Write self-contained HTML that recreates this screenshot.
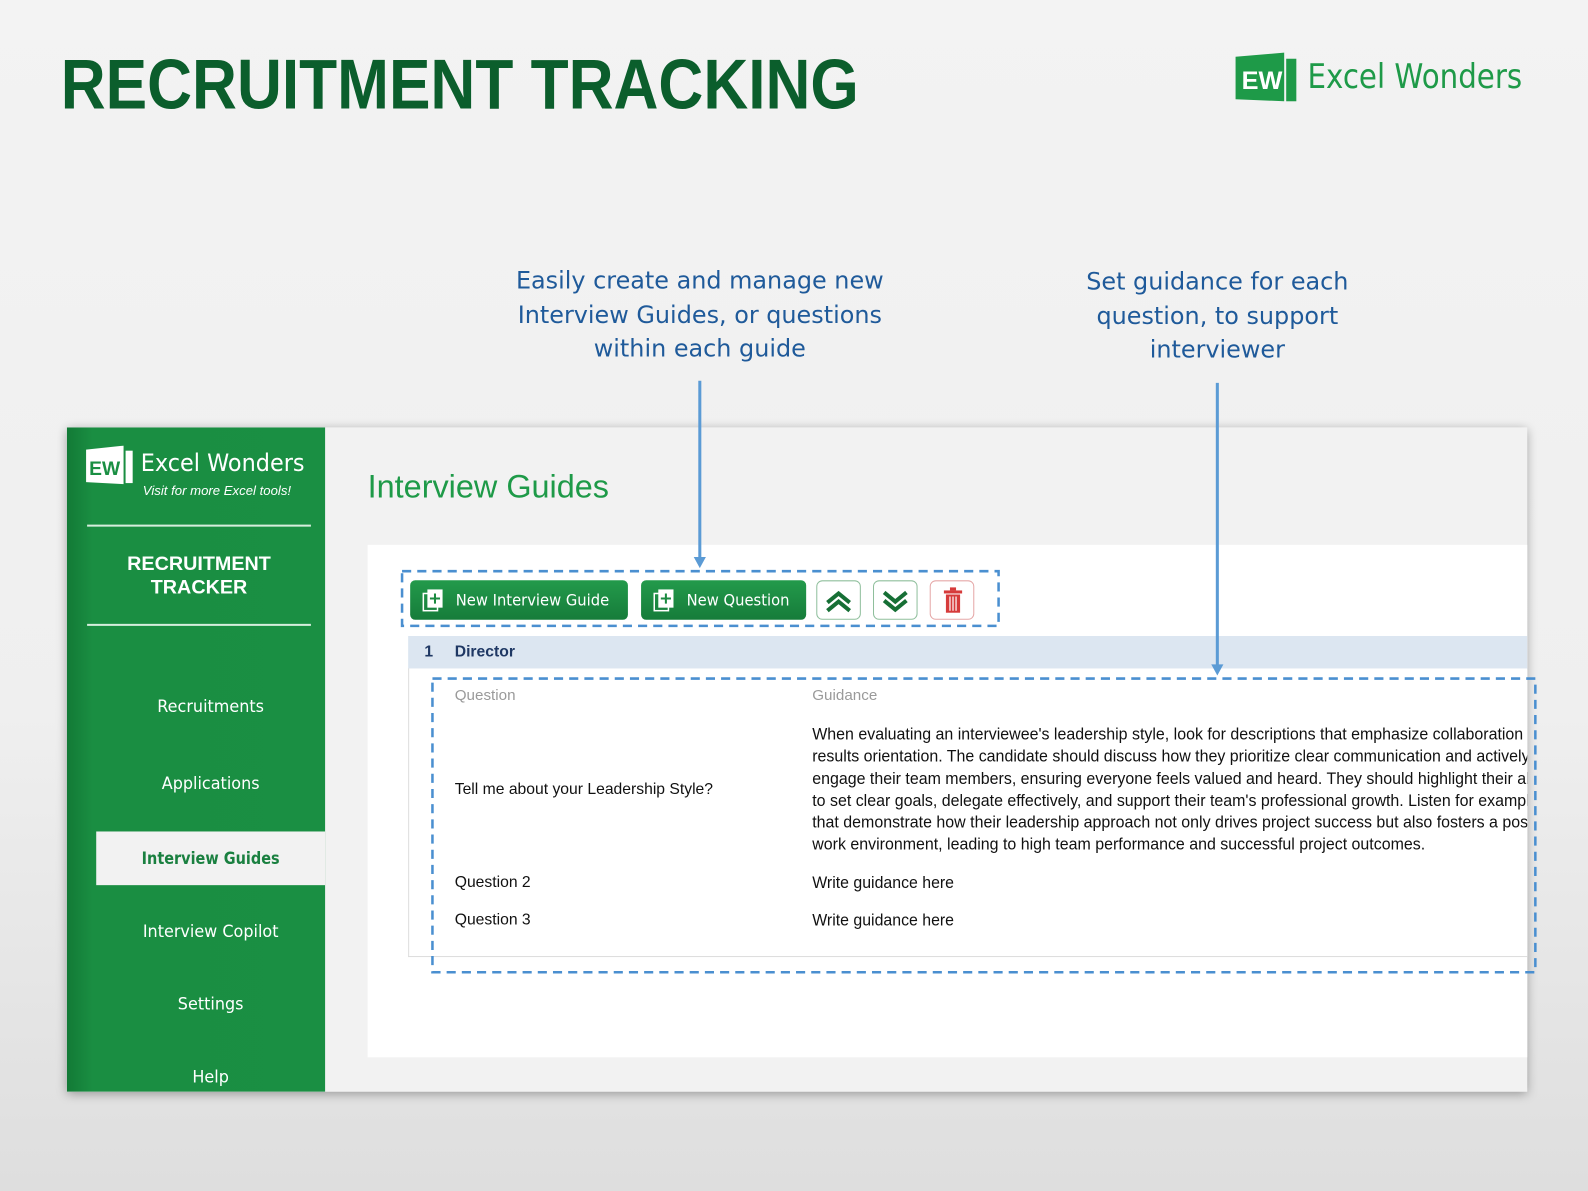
<!DOCTYPE html>
<html><head><meta charset="utf-8"><style>
html,body{margin:0;padding:0;width:1588px;height:1191px;overflow:hidden}
body{background:linear-gradient(180deg,#f3f3f3 0%,#efefef 60%,#dedede 100%);font-family:"Liberation Sans",sans-serif}
#w{position:absolute;left:0;top:0;width:1568px;height:1176px;transform:scale(1.01276);transform-origin:0 0}
.a{position:absolute}
.ann{position:absolute;color:#1f5a9a;font-size:23.6px;line-height:33.5px;text-align:center;font-family:"DejaVu Sans","Liberation Sans",sans-serif;letter-spacing:0}
.menu{position:absolute;left:95px;width:226px;text-align:center;color:#fff;font-size:17px;font-family:"DejaVu Sans",sans-serif;transform:scaleX(.93)}
.btn{position:absolute;top:573px;height:39px;border-radius:5px;background:linear-gradient(180deg,#239a4b,#167c3a);color:#fff;font-size:16px;font-family:"DejaVu Sans",sans-serif;line-height:39px}
.btn span{transform:scaleX(.91);transform-origin:0 50%}
.sb{position:absolute;top:573px;width:44px;height:39px;border:1px solid #8fbf9c;border-radius:6px;background:#fff;box-sizing:border-box}
.g{position:absolute;left:802px;font-size:16.5px;color:#111;transform:scaleX(0.955);transform-origin:0 0;white-space:nowrap}
</style></head><body><div id="w">
<svg class="a" style="left:0;top:0" width="1568" height="140">
<text x="60" y="107" font-family="Liberation Sans" font-weight="bold" font-size="70" fill="#0b5e2c" textLength="788" lengthAdjust="spacingAndGlyphs">RECRUITMENT TRACKING</text>
<g transform="translate(1220,52)"><path d="M0 4 L48 0 L48 48 L0 46Z" fill="#1e9a48"/><rect x="50" y="6" width="10" height="42" fill="#1e9a48"/><text x="6" y="36" font-family="Liberation Sans" font-weight="bold" font-size="25" fill="#fff">EW</text></g>
<text x="1291" y="87" font-family="DejaVu Sans" font-size="33" fill="#1e9a48" textLength="212" lengthAdjust="spacingAndGlyphs">Excel Wonders</text>
</svg>
<div class="ann" style="left:480px;top:261px;width:422px">Easily create and manage new<br>Interview Guides, or questions<br>within each guide</div>
<div class="ann" style="left:1000px;top:262px;width:404px">Set guidance for each<br>question, to support<br>interviewer</div>

<div class="a" style="left:66px;top:422px;width:1442px;height:656px;background:#f2f2f2;box-shadow:0 2px 10px rgba(0,0,0,.35);overflow:hidden">
 <div class="a" style="left:0;top:0;width:255px;height:656px;background:linear-gradient(90deg,#127a36 0%,#1a8e42 10%,#1a8f43 100%)"></div>
 <div class="a" style="left:297px;top:116px;width:1160px;height:506px;background:#fff"></div>
 <div class="a" style="left:297px;top:40px;color:#1e9a48;font-size:32px">Interview Guides</div>
</div>
<svg class="a" style="left:84px;top:440px" width="50" height="40"><path d="M1 4 L38 0 L38 38 L1 36Z" fill="#fff"/><rect x="40" y="5" width="7" height="32" fill="#fff"/><text x="4" y="29" font-family="Liberation Sans" font-weight="bold" font-size="19" fill="#1a8f43">EW</text></svg>
<div class="a" style="left:139px;top:443px;color:#fff;font-size:24px;font-family:'DejaVu Sans',sans-serif;transform:scaleX(.92);transform-origin:0 0">Excel Wonders</div>
<div class="a" style="left:141px;top:477px;color:#fff;font-size:13px;font-style:italic">Visit for more Excel tools!</div>
<div class="a" style="left:86px;top:518px;width:221px;height:2px;background:#d6eedd"></div>
<div class="a" style="left:86px;top:546px;width:221px;text-align:center;color:#fff;font-weight:bold;font-size:19.5px;line-height:23px">RECRUITMENT<br>TRACKER</div>
<div class="a" style="left:86px;top:616px;width:221px;height:2px;background:#d6eedd"></div>
<div class="menu" style="top:688px">Recruitments</div>
<div class="menu" style="top:764px">Applications</div>
<div class="a" style="left:95px;top:821px;width:226px;height:53px;background:#f2f2f2"></div>
<div class="menu" style="top:838px;color:#1a8040;font-weight:bold;transform:scaleX(.84)">Interview Guides</div>
<div class="menu" style="top:910px">Interview Copilot</div>
<div class="menu" style="top:982px">Settings</div>
<div class="menu" style="top:1054px">Help</div>

<div class="btn" style="left:405px;width:215px"><svg class="a" style="left:12px;top:8px" width="22" height="24"><rect x="1" y="5" width="14" height="17" fill="none" stroke="#fff" stroke-width="1.5"/><rect x="5" y="1" width="15" height="18" fill="#fff"/><path d="M12.5 5v10M7.5 10h10" stroke="#1a8a40" stroke-width="2"/></svg><span style="position:absolute;left:45px">New Interview Guide</span></div>
<div class="btn" style="left:633px;width:163px"><svg class="a" style="left:12px;top:8px" width="22" height="24"><rect x="1" y="5" width="14" height="17" fill="none" stroke="#fff" stroke-width="1.5"/><rect x="5" y="1" width="15" height="18" fill="#fff"/><path d="M12.5 5v10M7.5 10h10" stroke="#1a8a40" stroke-width="2"/></svg><span style="position:absolute;left:45px">New Question</span></div>
<div class="sb" style="left:806px"><svg width="44" height="39"><path d="M10 21l11-9 11 9M10 29l11-9 11 9" fill="none" stroke="#166f35" stroke-width="4"/></svg></div>
<div class="sb" style="left:862px"><svg width="44" height="39"><path d="M10 11l11 9 11-9M10 19l11 9 11-9" fill="none" stroke="#166f35" stroke-width="4"/></svg></div>
<div class="sb" style="left:918px;border-color:#e5a7a7"><svg width="44" height="39"><rect x="13" y="9" width="18" height="3" fill="#d63b3b"/><rect x="19" y="6" width="6" height="3" fill="#d63b3b"/><rect x="15" y="13" width="14" height="18" fill="#d63b3b"/><path d="M19 15v14M22 15v14M25 15v14" stroke="#fff" stroke-width="1.2"/></svg></div>

<div class="a" style="left:403px;top:628px;width:1105px;height:32px;background:#dce6f1;border-bottom:1px solid #c8d4e0"></div>
<div class="a" style="left:419px;top:635px;color:#1f3864;font-weight:bold;font-size:15.5px">1</div>
<div class="a" style="left:449px;top:635px;color:#1f3864;font-weight:bold;font-size:15.5px">Director</div>
<div class="a" style="left:403px;top:660px;width:1105px;height:285px;background:#fff;border-left:1px solid #ddd;border-bottom:1px solid #ddd;box-sizing:border-box"></div>
<div class="a" style="left:449px;top:678px;color:#9a9a9a;font-size:15px">Question</div>
<div class="a" style="left:802px;top:678px;color:#9a9a9a;font-size:15px">Guidance</div>
<div class="a" style="left:449px;top:771px;color:#111;font-size:15.5px">Tell me about your Leadership Style?</div>
<div class="a" style="left:449px;top:863px;color:#111;font-size:15.5px">Question 2</div>
<div class="a" style="left:449px;top:900px;color:#111;font-size:15.5px">Question 3</div>
<div class="a" style="left:802px;top:863px;color:#111;font-size:16.5px;transform:scaleX(.95);transform-origin:0 0">Write guidance here</div>
<div class="a" style="left:802px;top:900px;color:#111;font-size:16.5px;transform:scaleX(.95);transform-origin:0 0">Write guidance here</div>
<div class="a" style="left:0;top:0;width:1508px;height:1176px;overflow:hidden">
<div class="g" style="top:716px">When evaluating an interviewee's leadership style, look for descriptions that emphasize collaboration and</div>
<div class="g" style="top:738px">results orientation. The candidate should discuss how they prioritize clear communication and actively</div>
<div class="g" style="top:760px">engage their team members, ensuring everyone feels valued and heard. They should highlight their ability</div>
<div class="g" style="top:782px">to set clear goals, delegate effectively, and support their team's professional growth. Listen for examples</div>
<div class="g" style="top:803px">that demonstrate how their leadership approach not only drives project success but also fosters a positive</div>
<div class="g" style="top:825px">work environment, leading to high team performance and successful project outcomes.</div>
</div>

<svg class="a" style="left:0;top:0" width="1568" height="1176">
<g fill="none" stroke="#4a8fd0" stroke-width="2.5" stroke-dasharray="9 6">
<rect x="397" y="564" width="589" height="54"/>
<rect x="427" y="670" width="1089" height="290"/>
</g>
<g stroke="#5b9bd5" stroke-width="3" fill="#5b9bd5">
<line x1="691" y1="376" x2="691" y2="552"/><path d="M685 550h12l-6 11z" stroke="none"/>
<line x1="1202" y1="378" x2="1202" y2="658"/><path d="M1196 656h12l-6 11z" stroke="none"/>
</g>
</svg>
</div></body></html>
